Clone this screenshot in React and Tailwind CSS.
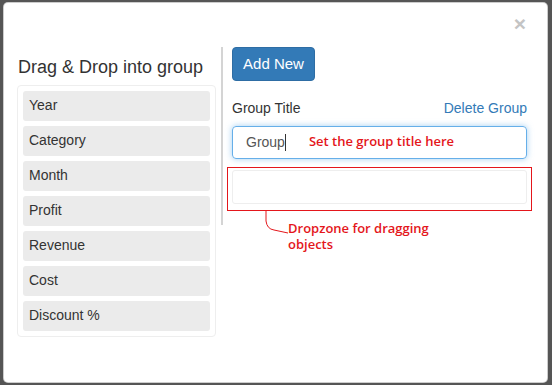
const fields = ["Year", "Category", "Month", "Profit", "Revenue", "Cost", "Discount %"];

export default function App() {
  return (
    <div className="w-[552px] h-[385px] bg-[#555555] pt-[2px] pl-[3px] font-['Liberation_Sans',Arial,sans-serif] text-[#333]">
      <div className="w-[545px] h-[381px] bg-white rounded-[5px] border border-black/20 flex flex-col">
        {/* header */}
        <div className="h-[44px] flex justify-end items-start pr-[21px] pt-[10px]">
          <button className="text-[21px] leading-[21px] font-bold text-[#c4c4c4]">×</button>
        </div>

        <div className="flex pl-[13px]">
          {/* left column */}
          <div className="w-[199px] pt-[10px]">
            <h4 className="text-[18px] leading-[20px] pl-px mb-[8px]">Drag &amp; Drop into group</h4>
            <div className="border border-[#eee] rounded-[4px] p-[5px] flex flex-col gap-[5px]">
              {fields.map((f) => (
                <div key={f} className="h-[30px] bg-[#ebebeb] rounded-[3px] pl-[6px] pb-[2px] flex items-center text-[14px]">
                  {f}
                </div>
              ))}
            </div>
          </div>

          {/* divider */}
          <div className="ml-[5px] w-[2px] h-[178px] bg-[#d4d4d4]" />

          {/* right column */}
          <div className="ml-[9px] w-[295px] flex flex-col">
            <button className="w-[83px] h-[34px] rounded-[4px] bg-[#337ab7] border border-[#2e6da4] text-white text-[15px]">
              Add New
            </button>
            <div className="mt-[17px] flex justify-between items-center text-[14px] leading-[20px]">
              <span>Group Title</span>
              <span className="text-[#337ab7]">Delete Group</span>
            </div>
            <div className="mt-[8px] h-[33px] border border-[#66afe9] rounded-[4px] shadow-[0_0_6px_rgba(102,175,233,0.6)] flex items-center pl-[13px] text-[14px] text-[#555]">
              <span>Group</span>
              <span className="w-px h-[17px] bg-[#333]" />
              <span className="ml-[23px] -mt-[2px] font-['Open_Sans',sans-serif] font-semibold text-[13px] text-[#e4161b]">
                Set the group title here
              </span>
            </div>

            {/* dropzone */}
            <div className="mt-[8px] -mx-[5px] border border-[#e4161b] pt-[2px] pb-[6px] px-[4px]">
              <div className="h-[34px] border border-[#eee] rounded-[3px]" />
            </div>

            {/* annotation */}
            <div className="flex -ml-[5px]">
              <svg width="61" height="24" viewBox="0 0 61 24" className="shrink-0">
                <path d="M39 0 V10 Q40 18 47 19 L61 22" fill="none" stroke="#e4161b" strokeWidth="1" />
              </svg>
              <div className="pt-[9px] w-[160px] font-['Open_Sans',sans-serif] font-semibold text-[13px] leading-[16px] text-[#e4161b]">
                Dropzone for dragging objects
              </div>
            </div>
          </div>
        </div>
      </div>
    </div>
  );
}
